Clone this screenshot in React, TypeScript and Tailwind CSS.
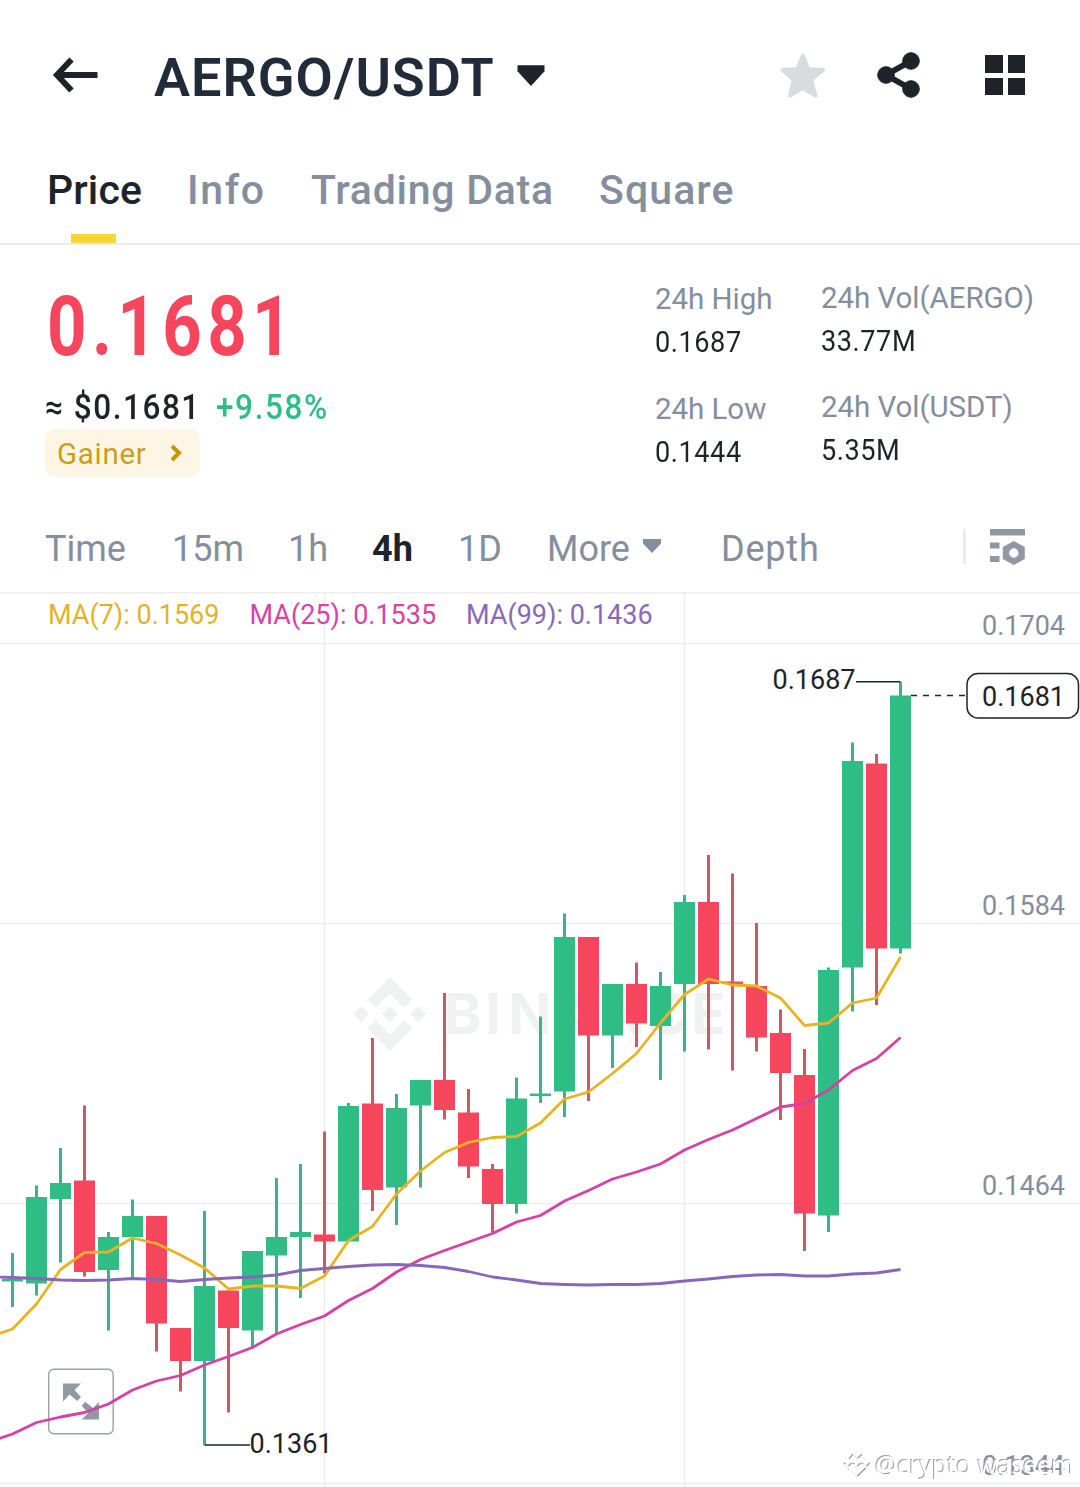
type Candle = [high: number, top: number, bottom: number, low: number, up: boolean];

const STEP = 24;

const candles: Candle[] = [
  [1253, 1279, 1281.5, 1307, true],
  [1185.5, 1197, 1283.5, 1295.5, true],
  [1148, 1183, 1199, 1262.5, true],
  [1105.5, 1180.5, 1272, 1276.5, false],
  [1232, 1237, 1270, 1330.5, true],
  [1199.5, 1216, 1237, 1277, true],
  [1216, 1216, 1323.5, 1351.5, false],
  [1328, 1328, 1361, 1391.5, false],
  [1211, 1286, 1361, 1445.5, true],
  [1290.5, 1290.5, 1328, 1412.5, false],
  [1251, 1251, 1330.5, 1347, true],
  [1178, 1237, 1255.5, 1333, true],
  [1164, 1232, 1237, 1298, true],
  [1131.5, 1234.5, 1241.5, 1273.5, false],
  [1103, 1106, 1241.5, 1241.5, true],
  [1038, 1103.5, 1190, 1211, false],
  [1094, 1108, 1187.5, 1225, true],
  [1080, 1080, 1105.5, 1187.5, true],
  [993, 1080, 1110, 1119.5, false],
  [1089, 1112.5, 1166.5, 1178, false],
  [1164, 1169, 1204, 1232.5, false],
  [1077.5, 1098.5, 1204, 1213.5, true],
  [1016.5, 1093.5, 1096, 1103, true],
  [913.5, 937, 1091.5, 1117, true],
  [937, 937, 1035.5, 1101, false],
  [984, 984, 1035.5, 1068, true],
  [962.5, 984, 1023.5, 1047, false],
  [972, 986, 1026, 1080, true],
  [895, 902, 984, 1051.5, true],
  [855, 902, 984, 1049.5, false],
  [873.5, 981.5, 984, 1070.5, false],
  [923, 986, 1037.5, 1051.5, false],
  [1009.5, 1033, 1073, 1120, false],
  [1049, 1075, 1213.5, 1251, false],
  [967.5, 970, 1215.5, 1232, true],
  [742.5, 761, 967.5, 1011.5, true],
  [754, 763.5, 948.5, 1005, false],
  [682, 695.5, 948.5, 953.5, true],
];

const ma7 = [
  1329, 1304, 1269.5, 1252.5, 1252, 1238, 1243.5, 1255, 1268, 1289, 1286, 1286, 1288.5, 1276,
  1240.5, 1226.5, 1194, 1171, 1152.5, 1142.5, 1137.5, 1136.5, 1123, 1099, 1092, 1073.5, 1053.5,
  1023, 994.5, 979, 985, 986, 998, 1025.5, 1023, 1003, 998, 957,
];

const ma25 = [
  1434, 1422.5, 1417, 1412.5, 1404, 1390, 1381, 1375.5, 1365, 1356.5, 1347.5, 1334, 1324.5, 1316,
  1300.5, 1288.5, 1272, 1259.5, 1250.5, 1242, 1233.5, 1222, 1215.5, 1201, 1190.5, 1179, 1172, 1164,
  1150, 1139.5, 1130, 1118.5, 1107, 1103.5, 1090, 1070.5, 1058.5, 1037.5,
];

const ma99 = [
  1277.5, 1278.5, 1280, 1280.5, 1280, 1278.5, 1279.5, 1281.5, 1279.5, 1278, 1277, 1275, 1270.5,
  1268.5, 1266.5, 1265, 1264.5, 1265.5, 1267.5, 1271.5, 1277, 1280, 1283.5, 1284.5, 1285, 1284.5,
  1284.5, 1283.5, 1281, 1279, 1276.5, 1275, 1274.5, 1276, 1276, 1274, 1273, 1269.5,
];

const linePoints = (start: number, values: number[]) =>
  [`-1,${start}`, ...values.map((y, i) => `${i * STEP + 12.5},${y}`)].join(' ');

const priceTicks = [
  { label: '0.1704', y: 643.5 },
  { label: '0.1584', y: 923.5 },
  { label: '0.1464', y: 1203.5 },
  { label: '0.1344', y: 1483.5 },
];

const tabs = [
  { label: 'Price', style: 'w-[94px] tracking-[0.1px] text-[#1e2329]' },
  { label: 'Info', style: 'w-[78px] tracking-[1.6px] text-[#848e9c]' },
  { label: 'Trading Data', style: 'w-[242px] tracking-[0.75px] text-[#848e9c]' },
  { label: 'Square', style: 'w-[136px] tracking-[1.1px] text-[#848e9c]' },
];

const stats = [
  {
    style: 'w-[166px] pt-[33px] gap-[26px]',
    items: [
      { label: '24h High', value: '0.1687' },
      { label: '24h Low', value: '0.1444' },
    ],
  },
  {
    style: 'w-[259px] pt-[32px] gap-[25px]',
    items: [
      { label: '24h Vol(AERGO)', value: '33.77M' },
      { label: '24h Vol(USDT)', value: '5.35M' },
    ],
  },
];

const Header = () => (
  <header className="flex h-[150px] items-center">
    <svg className="ml-[52px] h-10 w-[46px]" viewBox="0 0 46 40" fill="none" stroke="#1e2329" strokeWidth="6">
      <path d="M19.5 4.5 5 20l14.5 15.5M4 20h41.5" />
    </svg>
    <h1 className="ml-[56px] w-[363px] pt-[5px] text-[54px] leading-[64px] font-semibold tracking-[1px] whitespace-nowrap text-[#222b3a]">
      AERGO/USDT
    </h1>
    <svg className="h-[21px] w-[28px]" viewBox="0 0 28 21" fill="#1e2329">
      <path d="M.5.3h27v6L14 21 .5 6.300z" />
    </svg>
    <svg className="ml-[235px] h-[46px] w-[46px]" viewBox="0 0 46 46" fill="#d8dce1" stroke="#d8dce1" strokeWidth="4" strokeLinejoin="round">
      <path d="m22.700 3.500 5.300 13.500 15 1-11.800 9.700 4.200 15.800-12.700-7.500-12.700 7.500 3.800-15.800L2.500 18l15-1z" />
    </svg>
    <svg className="ml-[51px] h-[46px] w-[44px]" viewBox="0 0 44 46" fill="#1e2329" stroke="#1e2329">
      <path d="M34 9 9 23l25 14" fill="none" strokeWidth="6" />
      <circle cx="9" cy="23" r="8.300" />
      <circle cx="34" cy="9" r="8.300" />
      <circle cx="34" cy="37" r="8.300" />
    </svg>
    <div className="ml-[64px] grid grid-cols-2 gap-[5px]">
      <span className="size-[17.5px] bg-[#1e2329]" />
      <span className="size-[17.5px] bg-[#1e2329]" />
      <span className="size-[17.5px] bg-[#1e2329]" />
      <span className="size-[17.5px] bg-[#1e2329]" />
    </div>
  </header>
);

const Tabs = () => (
  <nav className="flex h-[95px] gap-[46px] border-b-2 border-[#eaebed] pl-[47px] text-[41px] leading-[80px] font-medium whitespace-nowrap">
    {tabs.map((tab, i) => (
      <div key={tab.label} className={`relative ${tab.style}`}>
        {tab.label}
        {i === 0 && <span className="absolute bottom-0 left-6 h-[9px] w-[45px] bg-[#fcd535]" />}
      </div>
    ))}
  </nav>
);

const Overview = () => (
  <section className="flex h-[261px]">
    <div className="w-[655px] pt-[42px] pl-[45px]">
      <div className="ml-0.5 origin-left scale-x-[0.83] text-[83px] leading-[80px] font-bold tracking-[6.5px] text-[#f6465d]">
        0.1681
      </div>
      <div className="mt-[21px] flex text-[35px] leading-10 font-medium whitespace-nowrap">
        <span className="w-[171px] origin-left scale-x-90 tracking-[1.7px] text-[#1e2329]">≈ $0.1681</span>
        <span className="origin-left scale-x-90 tracking-[1.8px] text-[#2ebd85]">+9.58%</span>
      </div>
      <div className="mt-px flex h-12 w-[155px] items-center rounded-[10px] bg-[#fdf6e4] pl-3 text-[29.5px] text-[#c99f1c]">
        <span className="w-[112px] pt-0.5 tracking-[0.7px]">Gainer</span>
        <svg className="h-[18px] w-[14px]" viewBox="0 0 14 18" fill="none" stroke="#c99400" strokeWidth="4">
          <path d="m3 2 7 7-7 7" />
        </svg>
      </div>
    </div>
    {stats.map((column) => (
      <dl key={column.items[0].label} className={`flex flex-col ${column.style}`}>
        {column.items.map((item) => (
          <div key={item.label} className="text-[29.5px] leading-[42px] whitespace-nowrap">
            <dt className="tracking-[-0.05px] text-[#848e9c]">{item.label}</dt>
            <dd className="-mb-px origin-left scale-x-[0.92] pt-px tracking-[0.6px] text-[#1e2329]">{item.value}</dd>
          </div>
        ))}
      </dl>
    ))}
  </section>
);

const Intervals = () => (
  <section className="flex h-[86px] items-center pl-[45px] text-[36px] whitespace-nowrap text-[#848e9c]">
    <span className="w-[127px]">Time</span>
    <span className="w-[116px]">15m</span>
    <span className="w-[84px]">1h</span>
    <span className="w-[86px] font-bold text-[#1e2329]">4h</span>
    <span className="w-[89px]">1D</span>
    <span className="w-[96px]">More</span>
    <svg className="-mt-1.5 h-[14px] w-[18px]" viewBox="0 0 18 14" fill="#848e9c">
      <path d="M0 0h18v4.500L9 14 0 4.500z" />
    </svg>
    <span className="ml-[60px] w-[242px] tracking-[0.8px]">Depth</span>
    <span className="-mt-1.5 h-[35px] w-[3px] bg-[#eaecef]" />
    <svg className="-mt-1 ml-6 h-9 w-[35px]" viewBox="0 0 35 36" fill="#9098a3">
      <path d="M0 0h35v6.500H0zM0 13.500h9.500v6H0zM0 27h9.500v6H0z" />
      <path fillRule="evenodd" d="m23.800 12 11 6v12l-11 6-11-6V18zm0 7.300a4.700 4.700 0 1 0 0 9.400 4.700 4.700 0 0 0 0-9.400z" />
    </svg>
  </section>
);

const Chart = () => (
  <svg className="block h-[895px] w-[1080px]" viewBox="0 592 1080 895" fontSize="27">
    <g stroke="#ebedee" strokeWidth="1.5">
      <path d="M0 592.500h1080" strokeWidth="2" />
      <path d="M324.500 592v895M684.500 592v895" />
      {priceTicks.map((tick) => (
        <path key={tick.label} d={`M0 ${tick.y}h1080`} />
      ))}
    </g>

    <g fill="#f0f2f2">
      <path d="m390 977 22.500 22.500-8.500 8-14-14-14 14-8.500-8zM390 1051l22.500-22.500-8.500-8-14 14-14-14-8.500 8z" />
      <path d="m390 1006 8 8-8 8-8-8zM361 1006l8 8-8 8-8-8zM418 1006l8 8-8 8-8-8z" />
      <text x="444 485 508 554 602 647 691" y="1034" fontSize="57" fontWeight="700" className="font-[Inter,sans-serif]">
        BINANCE
      </text>
    </g>

    <g>
      <text x="48" y="623.5" fill="#e0b429">MA(7): 0.1569</text>
      <text x="249.5" y="623.5" fill="#d544a6">MA(25): 0.1535</text>
      <text x="466" y="623.5" fill="#8b68b6">MA(99): 0.1436</text>
    </g>

    <g fill="#848e9c">
      {priceTicks.map((tick) => (
        <text key={tick.label} x="982" y={tick.y - 8.5}>
          {tick.label}
        </text>
      ))}
    </g>

    <rect x="48.7" y="1369.2" width="64.5" height="64.5" rx="5" fill="#fff" stroke="#9aa1ab" strokeWidth="1.4" />
    <g fill="#9299a4">
      <path d="M63 1383.500h18l-6.500 6.500 6.500 7-3.700 4-7.800-6.500-6.500 7z" />
      <path d="M99 1419.500H81.700l6.300-6.500-6.300-7.300 3.500-4 7.800 6.300 6-6z" />
    </g>

    {candles.map(([high, top, bottom, low, up], i) => (
      <g key={i}>
        <rect x={i * STEP + 11} y={high} width="3" height={low - high} fill={up ? '#3fb185' : '#d2566a'} />
        <rect x={i * STEP + 2} y={top} width="21" height={bottom - top} fill={up ? '#2ebd85' : '#f6465d'} />
      </g>
    ))}

    <g fill="none" strokeWidth="2.8" strokeLinejoin="round">
      <polyline points={linePoints(1333.5, ma7)} stroke="#e6b422" />
      <polyline points={linePoints(1438.5, ma25)} stroke="#d541a7" />
      <polyline points={linePoints(1277, ma99)} stroke="#8866b8" />
    </g>

    <g stroke="#1e2329" strokeWidth="1.5" fill="none">
      <path d="M856 681.700h44.500M205 1445h45" />
      <path d="M911 695.500h56" strokeDasharray="6 6" />
      <rect x="967" y="673.5" width="111.5" height="44.5" rx="11" fill="#fff" />
    </g>
    <g fill="#1e2329">
      <text x="772.5" y="688.5">0.1687</text>
      <text x="982" y="705.5">0.1681</text>
      <text x="249.5" y="1452.5">0.1361</text>
    </g>

    <g className="[filter:drop-shadow(-0.7px_-0.7px_0.3px_#9a9ea3)]">
      <path
        d="m845 1464 4 4 4-4M854 1464l4 4 4-4M863 1464l4 4 4-4M850 1460l3.500-4 4.500 4 4.500-4 3.500 4M849 1469l9 9 9-9"
        fill="none"
        stroke="#fff"
        strokeWidth="1.8"
      />
      <text x="875" y="1473.5" fontSize="24.8" fill="#fff" className="font-['Noto_Sans',sans-serif]">
        @crypto waseem
      </text>
    </g>
  </svg>
);

export default function App() {
  return (
    <main className="h-[1487px] w-[1080px] overflow-hidden bg-white font-[Roboto,sans-serif]">
      <Header />
      <Tabs />
      <Overview />
      <Intervals />
      <Chart />
    </main>
  );
}
